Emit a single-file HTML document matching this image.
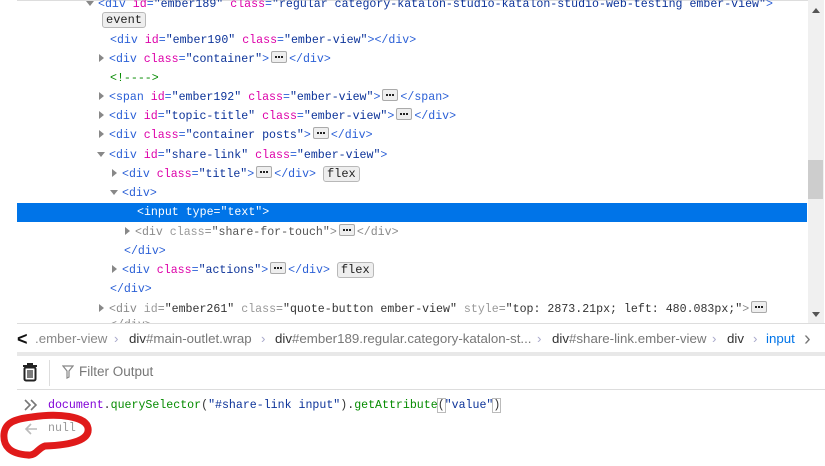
<!DOCTYPE html>
<html><head><meta charset="utf-8"><style>
body{margin:0;width:825px;height:466px;background:#fff;position:relative;overflow:hidden;font-family:"Liberation Mono",monospace;}
.r{position:absolute;left:0;height:19px;line-height:19px;font-size:11.6px;white-space:pre;color:#2a5fd6}
.n{color:#dd00a9}.v{color:#0c3399}.c{color:#058b00}.g{color:#999}.dim{color:#8a8a8a}
.tri{display:inline-block;width:0;height:0;border-left:5px solid #888;border-top:4px solid transparent;border-bottom:4px solid transparent;margin-right:5px;vertical-align:0}
.down{display:inline-block;width:0;height:0;border-top:5px solid #888;border-left:4px solid transparent;border-right:4px solid transparent;margin-right:4px;vertical-align:1px}
.dots{display:inline-block;width:14px;height:10px;border:1px solid #aaa;border-radius:2px;background:#eee;vertical-align:-1px;position:relative;margin:0 2px}
.dots:after{content:"";position:absolute;left:3px;top:4px;width:2px;height:2px;background:#222;box-shadow:3px 0 #222,6px 0 #222}
.badge{display:inline-block;border:1px solid #b8b8b8;border-radius:3px;background:#eee;color:#222;line-height:14px;padding:0 3px;font-size:12px}
.sel{background:#0074e8;color:#fff}
.sans{font-family:"Liberation Sans",sans-serif}
</style></head><body>
<div style="position:absolute;left:17px;top:0;width:791px;height:1px;background:#ddd"></div>
<div class="r" style="top:-5px;left:86px"><span class="down"></span>&lt;div <span class="n">id</span>=<span class="v">"ember189"</span> <span class="n">class</span>=<span class="v">"regular category-katalon-studio-katalon-studio-web-testing ember-view"</span>&gt;</div>
<div class="r" style="top:11px;left:102px"><span class="badge">event</span></div>
<div class="r" style="top:31px;left:110px">&lt;div <span class="n">id</span>=<span class="v">"ember190"</span> <span class="n">class</span>=<span class="v">"ember-view"</span>&gt;&lt;/div&gt;</div>
<div class="r" style="top:50px;left:99px"><span class="tri"></span>&lt;div <span class="n">class</span>=<span class="v">"container"</span>&gt;<span class="dots"></span>&lt;/div&gt;</div>
<div class="r c" style="top:69px;left:110px">&lt;!----&gt;</div>
<div class="r" style="top:88px;left:99px"><span class="tri"></span>&lt;span <span class="n">id</span>=<span class="v">"ember192"</span> <span class="n">class</span>=<span class="v">"ember-view"</span>&gt;<span class="dots"></span>&lt;/span&gt;</div>
<div class="r" style="top:107px;left:99px"><span class="tri"></span>&lt;div <span class="n">id</span>=<span class="v">"topic-title"</span> <span class="n">class</span>=<span class="v">"ember-view"</span>&gt;<span class="dots"></span>&lt;/div&gt;</div>
<div class="r" style="top:126px;left:99px"><span class="tri"></span>&lt;div <span class="n">class</span>=<span class="v">"container posts"</span>&gt;<span class="dots"></span>&lt;/div&gt;</div>
<div class="r" style="top:146px;left:97px"><span class="down"></span>&lt;div <span class="n">id</span>=<span class="v">"share-link"</span> <span class="n">class</span>=<span class="v">"ember-view"</span>&gt;</div>
<div class="r" style="top:165px;left:112px"><span class="tri"></span>&lt;div <span class="n">class</span>=<span class="v">"title"</span>&gt;<span class="dots"></span>&lt;/div&gt; <span class="badge">flex</span></div>
<div class="r" style="top:184px;left:110px"><span class="down"></span>&lt;div&gt;</div>
<div class="r sel" style="top:203px;left:17px;width:790px;padding-left:120px;box-sizing:border-box">&lt;input type="text"&gt;</div>
<div class="r" style="top:223px;left:125px"><span class="tri"></span><span class="dim">&lt;div <span class="g">class</span>=<span style="color:#555">"share-for-touch"</span>&gt;</span><span class="dots"></span><span class="dim">&lt;/div&gt;</span></div>
<div class="r" style="top:242px;left:124px">&lt;/div&gt;</div>
<div class="r" style="top:261px;left:112px"><span class="tri"></span>&lt;div <span class="n">class</span>=<span class="v">"actions"</span>&gt;<span class="dots"></span>&lt;/div&gt; <span class="badge">flex</span></div>
<div class="r" style="top:280px;left:110px">&lt;/div&gt;</div>
<div class="r" style="top:300px;left:99px"><span class="tri"></span><span class="dim">&lt;div <span class="g">id</span>=<span style="color:#333">"ember261"</span> <span class="g">class</span>=<span style="color:#333">"quote-button ember-view"</span> <span class="g">style</span>=<span style="color:#333">"top: 2873.21px; left: 480.083px;"</span>&gt;</span><span class="dots"></span></div>
<div class="r dim" style="top:316px;left:110px;height:7px;overflow:hidden">&lt;/div&gt;</div>
<div style="position:absolute;left:808px;top:0;width:16px;height:323px;background:#f0f0f0"></div>
<div style="position:absolute;left:812px;top:8px;width:0;height:0;border-bottom:5px solid #555;border-left:4px solid transparent;border-right:4px solid transparent"></div>
<div style="position:absolute;left:812px;top:312px;width:0;height:0;border-top:5px solid #555;border-left:4px solid transparent;border-right:4px solid transparent"></div>
<div style="position:absolute;left:808px;top:160px;width:15px;height:39px;background:#cdcdcd"></div>
<div style="position:absolute;left:17px;top:323px;width:808px;height:1px;background:#ddd"></div>
<div class="sans" style="position:absolute;left:17px;top:325px;width:808px;height:28px;line-height:28px;font-size:13.3px;color:#333;white-space:nowrap">
<span style="position:absolute;left:0;font-size:18px;font-weight:bold;color:#111">&lt;</span>
<span style="position:absolute;left:18px;color:#888">.ember-view</span>
<span style="position:absolute;left:97px;color:#aac">›</span>
<span style="position:absolute;left:112px">div<span style="color:#777">#main-outlet.wrap</span></span>
<span style="position:absolute;left:244px;color:#aac">›</span>
<span style="position:absolute;left:258px">div<span style="color:#777">#ember189.regular.category-katalon-st...</span></span>
<span style="position:absolute;left:520px;color:#aac">›</span>
<span style="position:absolute;left:535px">div<span style="color:#777">#share-link.ember-view</span></span>
<span style="position:absolute;left:695px;color:#aac">›</span>
<span style="position:absolute;left:710px">div</span>
<span style="position:absolute;left:736px;color:#aac">›</span>
<span style="position:absolute;left:749px;color:#0074e8">input</span>
<span style="position:absolute;left:787px;font-size:20px;color:#777">›</span>
</div>
<div style="position:absolute;left:17px;top:352px;width:808px;height:4px;background:#e8e8e8"></div>
<svg style="position:absolute;left:22px;top:362px" width="16" height="20" viewBox="0 0 16 20"><rect x="1" y="3" width="14" height="2" fill="#222"/><rect x="5" y="1" width="6" height="2" fill="#222"/><rect x="2.5" y="5.5" width="11" height="13" rx="1.5" fill="none" stroke="#222" stroke-width="2"/><path d="M6 8v8M8 8v8M10 8v8" stroke="#222" stroke-width="1.2"/></svg>
<div style="position:absolute;left:49px;top:360px;width:1px;height:26px;background:#ddd"></div>
<svg style="position:absolute;left:62px;top:365px" width="12" height="14" viewBox="0 0 12 14"><path d="M1 1h10L7 6v6L5 13V6z" fill="none" stroke="#888" stroke-width="1.2"/></svg>
<div class="sans" style="position:absolute;left:79px;top:363px;font-size:13.5px;color:#777;line-height:18px">Filter Output</div>
<div style="position:absolute;left:17px;top:389px;width:808px;height:1px;background:#ddd"></div>
<svg style="position:absolute;left:24px;top:399px" width="14" height="12" viewBox="0 0 14 12"><path d="M1 1l5 5-5 5M7 1l5 5-5 5" fill="none" stroke="#777" stroke-width="1.6"/></svg>
<div class="r" style="top:396px;left:48px;color:#8000d7">document<span style="color:#333">.</span><span style="color:#058b00">querySelector</span><span style="color:#333">(</span><span class="v">"#share-link input"</span><span style="color:#333">).</span><span style="color:#058b00">getAttribute</span><span style="color:#333;outline:1px solid #bbb">(</span><span class="v">"value"</span><span style="color:#333;outline:1px solid #bbb">)</span></div>
<svg style="position:absolute;left:24px;top:423px" width="14" height="12" viewBox="0 0 14 12"><path d="M13 6H2M7 1L2 6l5 5" fill="none" stroke="#bbb" stroke-width="1.6"/></svg>
<div class="r" style="top:419px;left:48px;color:#999">null</div>
<svg style="position:absolute;left:0;top:410px" width="100" height="56" viewBox="0 0 100 56"><path d="M32 7 C58 3 86 6 88 18 C90 30 72 35 45 36 C38 38 36 46 28 45 C10 44 3 36 4 24 C5 13 14 9 32 7 Z" fill="none" stroke="#e01a1a" stroke-width="7"/></svg>
</body></html>
